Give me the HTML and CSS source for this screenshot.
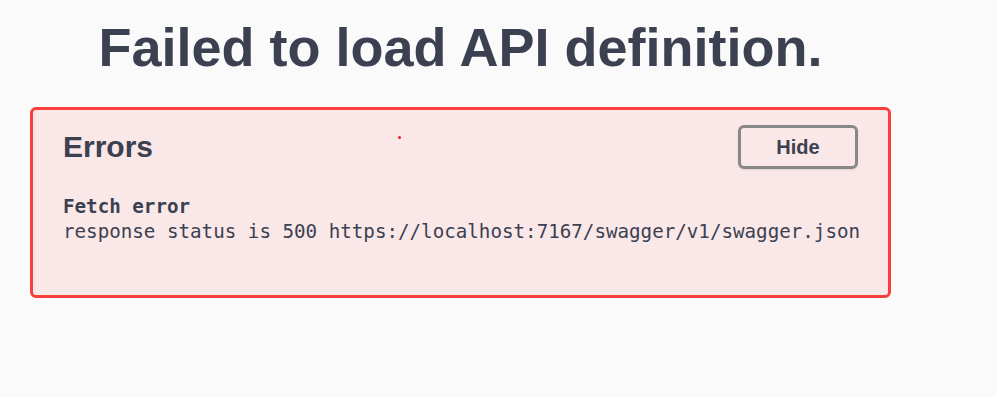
FILE: index.html
```html
<!DOCTYPE html>
<html>
<head>
<meta charset="utf-8">
<link rel="stylesheet" href="styles.css">
</head>
<body>
<div class="wrap">
  <h1 class="title">Failed to load API definition.</h1>
  <div class="errors">
    <span class="dot"></span>
    <div class="head">
      <h4>Errors</h4>
      <button class="btn">Hide</button>
    </div>
    <div class="error">
      <h4 class="kind">Fetch error</h4>
      <span class="msg">response status is 500 https://localhost:7167/swagger/v1/swagger.json</span>
    </div>
  </div>
</div>
</body>
</html>
```
FILE: styles.css
```css
html, body {
  margin: 0;
  padding: 0;
  background: #fafafa;
}
body {
  font-family: "Liberation Sans", Arial, sans-serif;
  color: #3b4151;
}
.wrap {
  width: 861px;
  margin-left: 30px;
  padding-top: 20px;
}
.title {
  margin: 0;
  font-size: 54px;
  line-height: 54px;
  font-weight: 700;
  text-align: center;
}
.errors {
  position: relative;
  box-sizing: border-box;
  margin-top: 33px;
  height: 191px;
  border: 3px solid #f93e3e;
  border-radius: 6px;
  background: #fae7e7;
  padding: 15px 30px 0;
}
.dot {
  position: absolute;
  left: 365px;
  top: 26px;
  width: 3px;
  height: 3px;
  border-radius: 50%;
  background: #e8202a;
}
.head {
  display: flex;
  align-items: center;
  justify-content: space-between;
}
.head h4 {
  margin: 0;
  font-size: 30px;
  font-weight: 700;
}
.btn {
  width: 120px;
  height: 44px;
  box-sizing: border-box;
  border: 3px solid #888;
  border-radius: 6px;
  background: transparent;
  box-shadow: 0 1px 2px rgba(0,0,0,.1);
  font-family: "Liberation Sans", Arial, sans-serif;
  font-size: 20px;
  font-weight: 700;
  color: #3b4151;
  padding: 0;
}
.error {
  margin-top: 25px;
  font-family: "DejaVu Sans Mono", "Liberation Mono", monospace;
  font-size: 19.2px;
  line-height: 25px;
}
.kind {
  margin: 0;
  font-size: 19.2px;
  font-weight: 700;
}
.msg {
  display: block;
  white-space: nowrap;
}
```
